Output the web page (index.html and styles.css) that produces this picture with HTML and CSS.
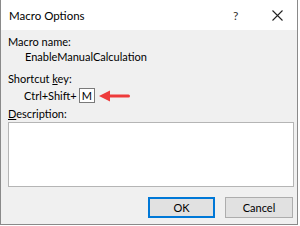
FILE: index.html
```html
<!DOCTYPE html>
<html lang="en">
<head>
    <meta charset="UTF-8">
    <title>Macro Options</title>
    <link rel="stylesheet" href="styles.css">
</head>
<body>
    <div class="dialog">
        <div class="titlebar">
            <span class="title">Macro Options</span>
            <span class="help">?</span>
            <span class="close">
                <svg width="11" height="11" viewBox="0 0 11 11">
                    <path d="M0.5 0.5 L10.5 10.5 M10.5 0.5 L0.5 10.5" stroke="#222" stroke-width="1.1" fill="none"/>
                </svg>
            </span>
        </div>

        <div class="content">
            <div class="label">Macro name:</div>
            <div class="macro-name">EnableManualCalculation</div>

            <div class="label shortcut-label">Shortcut <u>k</u>ey:</div>
            <div class="shortcut-row">
                <span>Ctrl+Shift+</span>
                <span class="key-box">M</span>
                <svg class="arrow" width="31" height="12" viewBox="0 0 31 12">
                    <path d="M10 6 L29.5 6" stroke="#ee3b3b" stroke-width="3" stroke-linecap="round"/>
                    <path d="M0 6 L11 0.5 L11 11.5 Z" fill="#ee3b3b"/>
                </svg>
            </div>

            <div class="label desc-label"><u>D</u>escription:</div>
            <div class="description"></div>

            <div class="buttons">
                <button class="btn btn-default">OK</button>
                <button class="btn">Cancel</button>
            </div>
        </div>
    </div>
</body>
</html>
```

FILE: styles.css
```css
body {
    margin: 0;
    background-color: #fff;
    font-family: Lato, "Noto Sans", sans-serif;
    font-size: 11px;
    color: #000;
}

.dialog {
    width: 296px;
    height: 224px;
    border: 1px solid #8a8a8a;
    border-top: none;
    background-color: #f0f0f0;
    display: flex;
    flex-direction: column;
}

.titlebar {
    height: 30px;
    background-color: #fff;
    display: flex;
    align-items: center;
    padding-left: 8px;
}

.title {
    flex: 1;
    font-size: 11.5px;
    color: #000;
}

.help {
    width: 8px;
    margin-right: 31px;
    color: #333;
    font-size: 12px;
}

.close {
    width: 11px;
    margin-right: 14px;
    display: flex;
}

.content {
    padding: 4px 4px 0 7px;
}

.label {
    line-height: 15px;
}

.macro-name {
    padding-left: 17px;
    line-height: 15px;
}

.shortcut-label {
    margin-top: 7px;
}

.shortcut-row {
    display: flex;
    align-items: center;
    padding-left: 16px;
    margin-top: 2px;
    height: 15px;
}

.key-box {
    width: 12px;
    height: 13px;
    border: 1px solid #7a7a7a;
    background-color: #fff;
    margin-left: 2px;
    padding-left: 2px;
    line-height: 13px;
}

.arrow {
    margin-left: 4px;
}

.desc-label {
    margin-top: 3px;
}

.description {
    width: 284px;
    height: 63px;
    border: 1px solid #b5b5b5;
    background-color: #fff;
    margin-top: 1px;
}

.buttons {
    display: flex;
    justify-content: flex-end;
    gap: 10px;
    margin-top: 10px;
}

.btn {
    width: 68px;
    height: 21px;
    font-family: Lato, "Noto Sans", sans-serif;
    font-size: 11px;
    color: #000;
    background-color: #e1e1e1;
    border: 1px solid #adadad;
    padding: 0;
}

.btn-default {
    width: 67px;
    border: 2px solid #0078d7;
}
```
